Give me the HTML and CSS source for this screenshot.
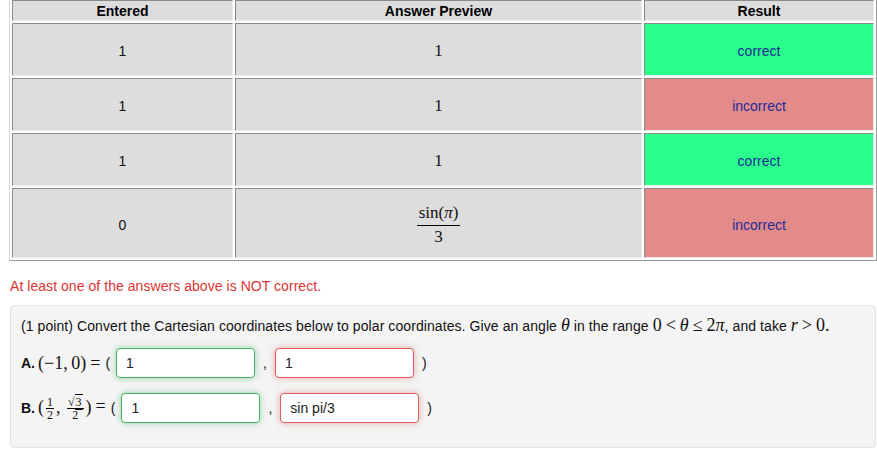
FILE: index.html
```html
<!DOCTYPE html>
<html>
<head>
    <meta charset="utf-8">
    <title>Attempt results</title>
    <link rel="stylesheet" href="styles.css">
</head>
<body>
    <table class="results">
        <tr class="head">
            <th class="col-entered">Entered</th>
            <th class="col-preview">Answer Preview</th>
            <th class="col-result">Result</th>
        </tr>
        <tr>
            <td>1</td>
            <td class="preview">1</td>
            <td class="ok">correct</td>
        </tr>
        <tr>
            <td>1</td>
            <td class="preview">1</td>
            <td class="bad">incorrect</td>
        </tr>
        <tr>
            <td>1</td>
            <td class="preview">1</td>
            <td class="ok">correct</td>
        </tr>
        <tr class="tall">
            <td>0</td>
            <td class="preview">
                <span class="frac">
                    <span class="num">sin(<i>π</i>)</span>
                    <span class="den">3</span>
                </span>
            </td>
            <td class="bad">incorrect</td>
        </tr>
    </table>

    <p class="warning">At least one of the answers above is NOT correct.</p>

    <div class="problem">
        <p class="prompt">(1 point) Convert the Cartesian coordinates below to polar coordinates. Give an angle <span class="math"><i>θ</i></span> in the range <span class="math">0<span class="rel">&lt;</span><i>θ</i><span class="rel">≤</span>2<i>π</i></span>, and take <span class="math"><i>r</i><span class="rel">&gt;</span>0.</span></p>

        <div class="answer-row">
            <b class="label">A.</b>
            <span class="math">(−1,&#8201;0)<span class="rel">=</span></span><span class="paren">(</span>
            <input class="ans good" type="text" value="1">
            <span class="comma">,</span>
            <input class="ans wrong" type="text" value="1">
            <span class="paren close">)</span>
        </div>

        <div class="answer-row">
            <b class="label">B.</b>
            <span class="math">(<span class="sfrac"><span>1</span><span>2</span></span>, <span class="sfrac"><span>√<span class="over">3</span></span><span>2</span></span>)<span class="rel">=</span></span><span class="paren">(</span>
            <input class="ans good" type="text" value="1">
            <span class="comma">,</span>
            <input class="ans wrong" type="text" value="sin pi/3">
            <span class="paren close">)</span>
        </div>
    </div>
</body>
</html>
```

FILE: styles.css
```css
* {
    box-sizing: border-box;
}
body {
    margin: 0;
    font-family: "Liberation Sans", Arial, sans-serif;
    font-size: 14px;
    color: #111;
    background-color: white;
}

/* results table */
.results {
    margin: -3px 0 0 9px;
    width: 868px;
    table-layout: fixed;
    border-collapse: separate;
    border-spacing: 2px;
    border: 1px solid;
    border-color: #d8d8d8 #9a9a9a #9a9a9a #d8d8d8;
}
.results th,
.results td {
    background-color: #dddddd;
    border: 1px solid;
    border-color: #8a8a8a #ececec #ececec #8a8a8a;
    text-align: center;
    vertical-align: middle;
    padding: 0 5px;
}
.results th {
    height: 21px;
    font-weight: bold;
    font-size: 14px;
    color: #000;
}
.col-entered { width: 221px; }
.col-preview { width: 407px; }
.col-result { width: 230px; }
.results td {
    height: 53px;
    padding-top: 3px;
}
.results tr.tall td {
    height: 70px;
}
.results td.preview {
    font-family: "Liberation Serif", "Times New Roman", serif;
    font-size: 17px;
}
.results td.ok {
    background-color: #29ff8a;
    color: #1f2a96;
}
.results td.bad {
    background-color: #e38a8b;
    color: #1f2a96;
}

.frac {
    display: inline-flex;
    flex-direction: column;
    align-items: center;
    vertical-align: middle;
    line-height: 22px;
}
.frac .num {
    border-bottom: 1px solid #000;
    padding: 0 2px 1px;
}

.warning {
    margin: 15px 0 0 10px;
    line-height: 20px;
    letter-spacing: 0.05px;
    color: #dd3333;
}

/* problem box */
.problem {
    margin: 9px 1px 0 10px;
    padding: 9px 10px 24px;
    background-color: #f4f4f4;
    border: 1px solid #e2e2e2;
    border-radius: 4px;
}
.prompt {
    margin: 0;
    line-height: 20px;
    letter-spacing: 0.08px;
}
.math {
    font-family: "Liberation Serif", "Times New Roman", serif;
    font-size: 18px;
    letter-spacing: 0;
}
.math i {
    font-style: italic;
}
.rel {
    margin: 0 4px;
}
.answer-row {
    display: flex;
    align-items: center;
    margin-top: 12px;
    height: 30px;
}
.answer-row + .answer-row {
    margin-top: 15px;
}
.label {
    margin-right: 3px;
}
.paren {
    font-size: 14px;
    margin: 0 6px 0 1px;
}
.paren.close {
    margin-left: 8px;
}
.comma {
    margin: 0 8px;
}
.ans {
    width: 139px;
    height: 30px;
    padding: 0 9px;
    font-family: "Liberation Sans", Arial, sans-serif;
    font-size: 14px;
    color: #222;
    background-color: white;
    border: 1px solid;
    border-radius: 4px;
    outline: none;
}
.ans.good {
    border-color: #45b565;
    box-shadow: 0 0 6px rgba(69, 181, 101, 0.55);
}
.ans.wrong {
    border-color: #e05c5c;
    box-shadow: 0 0 6px rgba(224, 92, 92, 0.5);
}

.sfrac {
    display: inline-flex;
    flex-direction: column;
    align-items: center;
    vertical-align: middle;
    font-size: 12px;
    line-height: 12px;
    margin: 0 2px;
}
.sfrac span:first-child {
    border-bottom: 1px solid #000;
    padding: 0 1px;
}
.sfrac .over {
    border-top: 1px solid #000;
}
```
